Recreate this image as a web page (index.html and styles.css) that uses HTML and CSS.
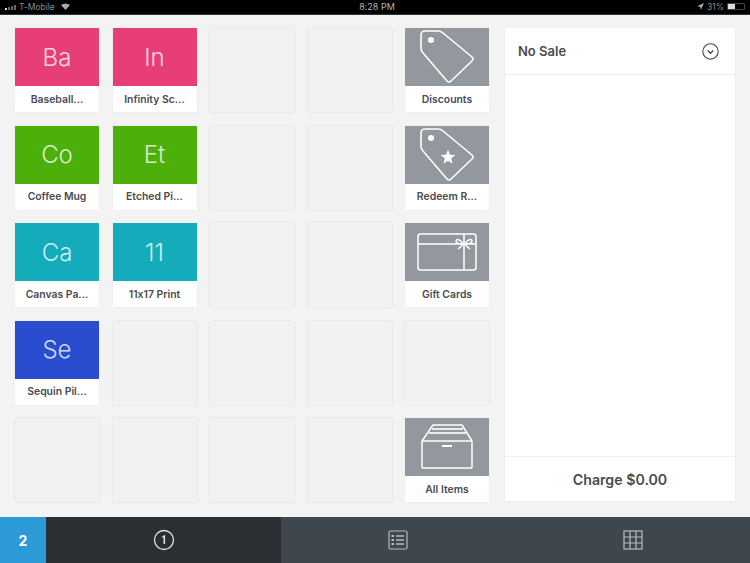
FILE: index.html
```html
<!DOCTYPE html>
<html lang="en">
<head>
  <meta charset="UTF-8" />
  <meta name="viewport" content="width=device-width, initial-scale=1.0"/>
  <title>Point of Sale</title>
  <link rel="stylesheet" href="styles.css">
</head>
<body>
  <header class="status">
    <div class="status-left">
      <svg class="signal" width="13" height="6" viewBox="0 0 13 6"><rect x="0" y="4" width="2" height="2" fill="#ddd"/><rect x="3" y="3" width="2" height="3" fill="#666"/><rect x="6" y="2" width="2" height="4" fill="#666"/><rect x="9" y="1" width="2" height="5" fill="#666"/></svg>
      <span>T-Mobile</span>
      <svg class="wifi" width="9" height="7" viewBox="0 0 9 7"><path d="M0 2 Q4.5 -1 9 2 L4.5 7 Z" fill="#aaa"/></svg>
    </div>
    <div class="status-time">8:28 PM</div>
    <div class="status-right">
      <svg width="7" height="7" viewBox="0 0 7 7"><path d="M7 0 L0 3.2 L3.2 3.8 L3.8 7 Z" fill="#aaa"/></svg>
      <span>31%</span>
      <span class="battery"><span class="battery-fill"></span></span>
    </div>
  </header>

  <main class="register">
    <section class="grid">
      <div class="tile"><div class="swatch pink">Ba</div><div class="label">Baseball...</div></div>
      <div class="tile"><div class="swatch pink">In</div><div class="label">Infinity Sc...</div></div>
      <div class="tile empty"></div>
      <div class="tile empty"></div>
      <div class="tile">
        <div class="swatch grey">
          <svg width="84" height="58" viewBox="0 0 84 58" fill="none" stroke="#fff" stroke-width="1.6" stroke-linejoin="round"><path d="M20 3 H33 Q36 3 38 5 L67 29 Q69 31 67 33 L46 53 Q44 55 42 53 L18 25 Q16 23 16 20 V7 Q16 3 20 3 Z"/><circle cx="26" cy="12" r="3" fill="#fff" stroke="none"/></svg>
        </div>
        <div class="label">Discounts</div>
      </div>

      <div class="tile"><div class="swatch green">Co</div><div class="label">Coffee Mug</div></div>
      <div class="tile"><div class="swatch green">Et</div><div class="label">Etched Pi...</div></div>
      <div class="tile empty"></div>
      <div class="tile empty"></div>
      <div class="tile">
        <div class="swatch grey">
          <svg width="84" height="58" viewBox="0 0 84 58" fill="none" stroke="#fff" stroke-width="1.6" stroke-linejoin="round"><path d="M20 3 H33 Q36 3 38 5 L67 29 Q69 31 67 33 L46 53 Q44 55 42 53 L18 25 Q16 23 16 20 V7 Q16 3 20 3 Z"/><circle cx="26" cy="12" r="3" fill="#fff" stroke="none"/><path d="M43 23.500 L44.900 28.800 L50.500 29 L46.100 32.400 L47.600 37.800 L43 34.700 L38.400 37.800 L39.900 32.400 L35.500 29 L41.100 28.800 Z" fill="#fff" stroke="none"/></svg>
        </div>
        <div class="label">Redeem R...</div>
      </div>

      <div class="tile"><div class="swatch teal">Ca</div><div class="label">Canvas Pa...</div></div>
      <div class="tile"><div class="swatch teal">11</div><div class="label">11x17 Print</div></div>
      <div class="tile empty"></div>
      <div class="tile empty"></div>
      <div class="tile">
        <div class="swatch grey">
          <svg width="84" height="58" viewBox="0 0 84 58" fill="none" stroke="#fff" stroke-width="1.5" stroke-linejoin="round"><rect x="13" y="11" width="58" height="36" rx="2.500"/><path d="M13 21 H71 M59 11 V47"/><path d="M59 21 Q52 14 51 18 Q51 21 59 21 Q66 14 67 18 Q67 21 59 21 M59 21 L53 26 M59 21 L65 26"/></svg>
        </div>
        <div class="label">Gift Cards</div>
      </div>

      <div class="tile"><div class="swatch blue">Se</div><div class="label">Sequin Pil...</div></div>
      <div class="tile empty"></div>
      <div class="tile empty"></div>
      <div class="tile empty"></div>
      <div class="tile empty"></div>

      <div class="tile empty"></div>
      <div class="tile empty"></div>
      <div class="tile empty"></div>
      <div class="tile empty"></div>
      <div class="tile">
        <div class="swatch grey">
          <svg width="84" height="58" viewBox="0 0 84 58" fill="none" stroke="#fff" stroke-width="1.5" stroke-linejoin="round"><rect x="17" y="23" width="50" height="27" rx="1"/><path d="M17 23 L28 7 H57 L67 23"/><path d="M27 11 H58 M24 15 H61" stroke-width="1.800" opacity=".8"/><path d="M37 28 H47" stroke-width="2"/></svg>
        </div>
        <div class="label">All Items</div>
      </div>
    </section>

    <aside class="sale">
      <div class="sale-head">
        <span>No Sale</span>
        <svg width="17" height="17" viewBox="0 0 17 17" fill="none" stroke="#444" stroke-width="1.100"><circle cx="8.500" cy="8.500" r="7.700"/><path d="M5.700 7.500 L8.500 10.300 L11.300 7.500" stroke-width="1.300"/></svg>
      </div>
      <div class="sale-body"></div>
      <div class="sale-charge">Charge $0.00</div>
    </aside>
  </main>

  <nav class="tabs">
    <div class="tab-count">2</div>
    <div class="tab tab-active">
      <svg width="22" height="22" viewBox="0 0 22 22" fill="none" stroke="#ddd" stroke-width="1.300"><circle cx="11" cy="11" r="9.500"/><path d="M9.500 8.300 L11.300 7.200 V15" stroke-width="1.600"/></svg>
    </div>
    <div class="tab tab-list">
      <svg width="20" height="20" viewBox="0 0 20 20" fill="none" stroke="#bbb" stroke-width="1.200"><rect x="1" y="1" width="18" height="18" rx="1.500"/><path d="M8 6 H16 M8 10 H16 M8 14 H16" stroke-width="1.400"/><path d="M3.500 6 H6 M3.500 10 H6 M3.500 14 H6" stroke-width="2"/></svg>
    </div>
    <div class="tab tab-grid">
      <svg width="20" height="20" viewBox="0 0 20 20" fill="none" stroke="#bbb" stroke-width="1.200"><rect x="1" y="1" width="18" height="18"/><path d="M7 1 V19 M13 1 V19 M1 7 H19 M1 13 H19"/></svg>
    </div>
  </nav>
</body>
</html>
```

FILE: styles.css
```css
* { box-sizing: border-box; }
html, body { margin: 0; padding: 0; }
body { width: 750px; height: 563px; overflow: hidden; display: flex; flex-direction: column; background: #f3f3f3; color: #4a4c50; font-family: Inter, "Liberation Sans", sans-serif; font-feature-settings: "calt" 0; }

.status { height: 15px; flex: none; display: grid; grid-template-columns: 1fr auto 1fr; align-items: center; padding: 0 5px 1px 5px; background: #000; color: #8a8a8a; font-size: 8.500px; border-bottom: 1px solid #333; }
.status-left { display: flex; align-items: center; gap: 1px; }
.wifi { margin-left: 5px; }
.status-time { padding-left: 4px; color: #b5b5b5; font-size: 9px; }
.status-right { display: flex; align-items: center; justify-content: flex-end; gap: 3px; }
.battery { width: 18px; height: 7px; border: 1px solid #444; border-radius: 1px; display: block; }
.battery-fill { width: 7px; height: 100%; background: #ddd; display: block; }

.register { flex: 1; min-height: 0; display: flex; padding: 13.400px 15px 0 15px; }

.grid { width: 474px; display: grid; grid-template-columns: repeat(5, 84px); grid-auto-rows: 84px; column-gap: 13.500px; row-gap: 13.500px; }
.tile { display: flex; flex-direction: column; background: #fff; box-shadow: 0 0 2px rgba(0,0,0,0.05); }
.tile.empty { background: #f2f2f2; box-shadow: 0 0 2px rgba(0,0,0,0.11); }
.swatch { height: 58px; flex: none; display: flex; align-items: center; justify-content: center; color: rgba(255,255,255,0.8); font-size: 24px; font-weight: 300; }
.pink { background: #e83e78; }
.green { background: #4caf0a; }
.teal { background: #14abba; }
.blue { background: #2a4dd0; }
.grey { background: #93989e; }
.label { flex: 1; display: flex; align-items: center; justify-content: center; font-size: 10.400px; font-weight: 600; white-space: nowrap; }

.sale { width: 231px; height: 473px; margin-left: 16px; display: flex; flex-direction: column; background: #fff; box-shadow: 0 0 2px rgba(0,0,0,0.05); }
.sale-head { height: 47px; flex: none; display: flex; align-items: center; justify-content: space-between; padding: 0 16px 0 13px; border-bottom: 1px solid #efefef; font-size: 13px; font-weight: 600; }
.sale-body { flex: 1; }
.sale-charge { height: 45px; flex: none; display: flex; align-items: center; justify-content: center; border-top: 1px solid #eee; font-size: 14.200px; font-weight: 600; }

.tabs { height: 46px; flex: none; display: flex; background: #3f474e; }
.tab-count { width: 46px; display: flex; align-items: center; justify-content: center; background: #2b9ad6; color: #fff; font-size: 14px; font-weight: 700; }
.tab { display: flex; align-items: center; justify-content: center; }
.tab-active { width: 235px; background: #2b2f33; }
.tab-list { width: 234px; }
.tab-grid { flex: 1; }
```
